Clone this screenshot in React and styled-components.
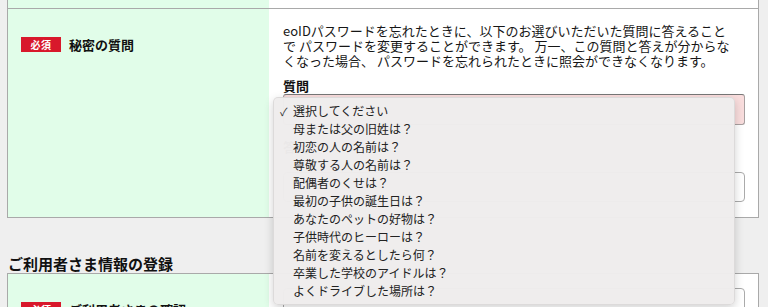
import React from 'react';
import styled, { createGlobalStyle } from 'styled-components';

const GlobalStyle = createGlobalStyle`
  html, body {
    margin: 0;
    padding: 0;
    background: #efefef;
    font-family: "Noto Sans CJK JP", "Liberation Sans", sans-serif;
    color: #111;
    overflow: hidden;
  }
`;

const Page = styled.div`
  position: relative;
  width: 768px;
  height: 307px;
  overflow: hidden;
`;

const Table = styled.div`
  margin-left: 7px;
  width: 750px;
  border: 1px solid #a9a9a9;
  border-top: ${props => (props.$cutTop ? 'none' : '1px solid #a9a9a9')};
  background: #fff;
`;

const Row = styled.div`
  display: grid;
  grid-template-columns: 261px 1fr;
  border-top: ${props => (props.$first ? 'none' : '1px solid #a9a9a9')};
  min-height: ${props => props.$height || 0}px;
`;

const LabelCell = styled.div`
  background: #e1fde9;
  padding: ${props => (props.$bare ? '0' : '28px 12px 0 13px')};
  display: flex;
  align-items: flex-start;
  gap: 8px;
`;

const ValueCell = styled.div`
  background: #fff;
  padding: ${props => (props.$bare ? '0' : '14px 13px 15px 14px')};
`;

const Badge = styled.span`
  display: inline-flex;
  align-items: center;
  justify-content: center;
  width: 40px;
  height: 15px;
  background: #d8182b;
  color: #fff;
  font-size: 10px;
  font-weight: 700;
  letter-spacing: 0.5px;
`;

const FieldTitle = styled.span`
  font-size: 13px;
  font-weight: 700;
  line-height: 15px;
  color: #111;
`;

const Note = styled.p`
  margin: 0;
  font-size: 13px;
  line-height: 15px;
  color: #161616;
  white-space: nowrap;
`;

const SubLabel = styled.div`
  margin-top: ${props => props.$top || 10}px;
  margin-bottom: ${props => props.$bottom || 0}px;
  font-size: 13px;
  font-weight: 700;
  line-height: 16px;
  color: #111;
`;

const SelectBox = styled.div`
  height: 29px;
  background: #f9dddd;
  border: 1px solid #a8a0a0;
  border-top-color: #777;
  border-radius: 3px;
`;

const TextInput = styled.div`
  height: 28px;
  background: #fff;
  border: 1px solid #aaa;
  border-radius: 4px;
`;

const SectionHeading = styled.h2`
  margin: 37px 0 1px 8px;
  font-size: 15px;
  line-height: 17px;
  font-weight: 700;
  color: #111;
`;

const Menu = styled.ul`
  position: absolute;
  left: 273px;
  top: 97px;
  width: 462px;
  height: 208px;
  margin: 0;
  padding: 4px 0 0;
  list-style: none;
  box-sizing: border-box;
  background: rgba(239, 237, 237, 0.98);
  border: 1px solid rgba(0, 0, 0, 0.08);
  border-radius: 5px;
  box-shadow: 0 3px 10px rgba(0, 0, 0, 0.18);
`;

const MenuItem = styled.li`
  position: relative;
  height: 18px;
  line-height: 18px;
  padding-left: 19px;
  font-size: 12px;
  color: #222;
`;

const Check = styled.span`
  position: absolute;
  left: 6px;
  top: 0;
  font-size: 11px;
  color: #333;
`;

const questions = [
  '選択してください',
  '母または父の旧姓は？',
  '初恋の人の名前は？',
  '尊敬する人の名前は？',
  '配偶者のくせは？',
  '最初の子供の誕生日は？',
  'あなたのペットの好物は？',
  '子供時代のヒーローは？',
  '名前を変えるとしたら何？',
  '卒業した学校のアイドルは？',
  'よくドライブした場所は？',
];

export default function App() {
  return (
    <Page>
      <GlobalStyle />
      <Table $cutTop>
        <Row $first $height={8}>
          <LabelCell $bare />
          <ValueCell $bare />
        </Row>
        <Row>
          <LabelCell>
            <Badge>必須</Badge>
            <FieldTitle>秘密の質問</FieldTitle>
          </LabelCell>
          <ValueCell>
            <Note>
              eoIDパスワードを忘れたときに、以下のお選びいただいた質問に答えること
              <br />
              で パスワードを変更することができます。 万一、この質問と答えが分からな
              <br />
              くなった場合、 パスワードを忘れられたときに照会ができなくなります。
            </Note>
            <SubLabel $top={10}>質問</SubLabel>
            <SelectBox />
            <SubLabel $top={14} $bottom={17}>答え</SubLabel>
            <TextInput />
          </ValueCell>
        </Row>
      </Table>

      <SectionHeading>ご利用者さま情報の登録</SectionHeading>
      <Table>
        <Row $first $height={60}>
          <LabelCell>
            <Badge>必須</Badge>
            <FieldTitle>ご利用者さまの確認</FieldTitle>
          </LabelCell>
          <ValueCell>
            <TextInput />
          </ValueCell>
        </Row>
      </Table>

      <Menu>
        {questions.map((q, i) => (
          <MenuItem key={q}>
            {i === 0 && <Check>✓</Check>}
            {q}
          </MenuItem>
        ))}
      </Menu>
    </Page>
  );
}
